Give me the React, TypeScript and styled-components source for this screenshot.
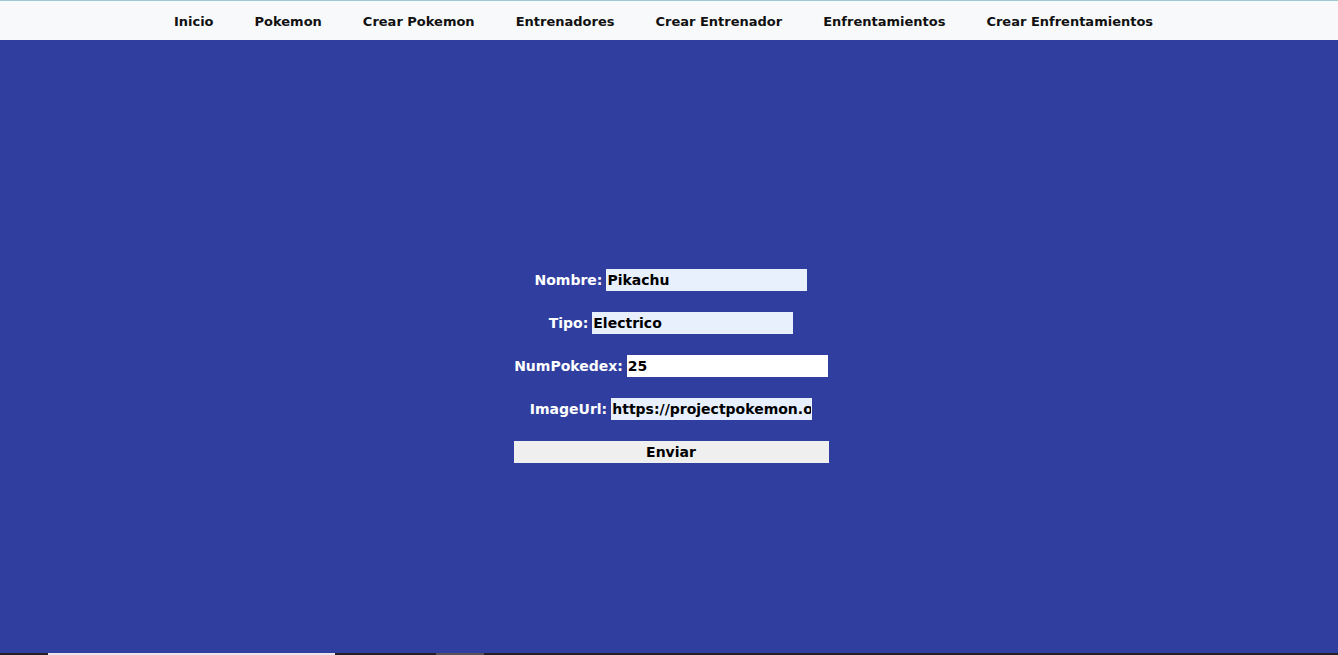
import styled, { createGlobalStyle } from 'styled-components'

const NAV_ITEMS = [
  'Inicio',
  'Pokemon',
  'Crear Pokemon',
  'Entrenadores',
  'Crear Entrenador',
  'Enfrentamientos',
  'Crear Enfrentamientos',
]

const FIELDS = [
  { label: 'Nombre:', value: 'Pikachu', autofilled: true },
  { label: 'Tipo:', value: 'Electrico', autofilled: true },
  { label: 'NumPokedex:', value: '25', autofilled: false },
  { label: 'ImageUrl:', value: 'https://projectpokemon.org/images/normal-sprite/pikachu.gif', autofilled: true },
]

export default function App() {
  return (
    <>
      <GlobalStyle />
      <Nav>
        <NavList>
          {NAV_ITEMS.map((item) => (
            <NavLink key={item} href="#">
              {item}
            </NavLink>
          ))}
        </NavList>
      </Nav>
      <Main>
        <Form onSubmit={(e) => e.preventDefault()}>
          {FIELDS.map((f) => (
            <Row key={f.label}>
              <Label>{f.label}</Label>
              <Input defaultValue={f.value} $autofilled={f.autofilled} />
            </Row>
          ))}
          <SubmitButton type="submit">Enviar</SubmitButton>
        </Form>
      </Main>
      <ScrollTrack>
        <ScrollThumb />
        <ScrollMark />
      </ScrollTrack>
    </>
  )
}

const GlobalStyle = createGlobalStyle`
  body {
    margin: 0;
    font-family: "DejaVu Sans", "Liberation Sans", sans-serif;
    background: #303f9f;
  }
`

const Nav = styled.nav`
  height: 39px;
  border-top: 1px solid #9fc9d1;
  background: #f8f9fb;
  display: flex;
  align-items: center;
  justify-content: center;
`

const NavList = styled.div`
  display: flex;
  gap: 41px;
  padding-right: 11px;
  padding-top: 2px;
`

const NavLink = styled.a`
  font-size: 13px;
  font-weight: 700;
  color: #111;
  text-decoration: none;
`

const Main = styled.main`
  min-height: calc(100vh - 4px);
  display: flex;
  align-items: center;
  justify-content: center;
`

const Form = styled.form`
  display: flex;
  flex-direction: column;
  align-items: center;
  gap: 21px;
  width: 315px;
  padding-left: 4px;
`

const Row = styled.div`
  display: flex;
  align-items: center;
  gap: 4px;
`

const Label = styled.label`
  font-size: 14px;
  font-weight: 700;
  color: #fff;
`

const Input = styled.input<{ $autofilled: boolean }>`
  width: 201px;
  height: 22px;
  box-sizing: border-box;
  border: none;
  padding: 0 1px;
  font-family: inherit;
  font-size: 14px;
  font-weight: 700;
  color: #000;
  background: ${({ $autofilled }) => ($autofilled ? '#e8f0fe' : '#ffffff')};
  outline: none;
`

const SubmitButton = styled.button`
  width: 315px;
  height: 22px;
  border: none;
  background: #efefef;
  font-family: inherit;
  font-size: 14px;
  font-weight: 700;
  color: #000;
  padding: 0;
`

const ScrollTrack = styled.div`
  position: fixed;
  left: 0;
  right: 0;
  bottom: 0;
  height: 2px;
  background: #222;
`

const ScrollThumb = styled.div`
  position: absolute;
  left: 48px;
  width: 287px;
  top: 0;
  height: 2px;
  background: #e8e8e8;
`

const ScrollMark = styled.div`
  position: absolute;
  left: 436px;
  width: 48px;
  top: 0;
  height: 2px;
  background: #555;
`
